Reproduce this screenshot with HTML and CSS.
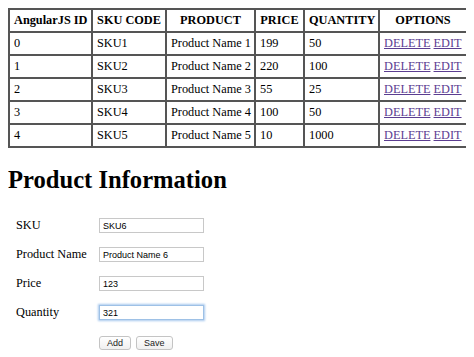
FILE: index.html
```html
<!DOCTYPE html>
<html lang="en">
<head>
  <meta charset="UTF-8">
  <title>Products</title>
  <link rel="stylesheet" href="styles.css">
</head>
<body>

<table class="products">
  <tr>
    <th class="c-id">AngularJS ID</th>
    <th class="c-sku">SKU CODE</th>
    <th class="c-name">PRODUCT</th>
    <th class="c-price">PRICE</th>
    <th class="c-qty">QUANTITY</th>
    <th class="c-opt">OPTIONS</th>
  </tr>
  <tr>
    <td>0</td><td>SKU1</td><td>Product Name 1</td><td>199</td><td>50</td>
    <td><a href="#">DELETE</a> <a href="#">EDIT</a></td>
  </tr>
  <tr>
    <td>1</td><td>SKU2</td><td>Product Name 2</td><td>220</td><td>100</td>
    <td><a href="#">DELETE</a> <a href="#">EDIT</a></td>
  </tr>
  <tr>
    <td>2</td><td>SKU3</td><td>Product Name 3</td><td>55</td><td>25</td>
    <td><a href="#">DELETE</a> <a href="#">EDIT</a></td>
  </tr>
  <tr>
    <td>3</td><td>SKU4</td><td>Product Name 4</td><td>100</td><td>50</td>
    <td><a href="#">DELETE</a> <a href="#">EDIT</a></td>
  </tr>
  <tr>
    <td>4</td><td>SKU5</td><td>Product Name 5</td><td>10</td><td>1000</td>
    <td><a href="#">DELETE</a> <a href="#">EDIT</a></td>
  </tr>
</table>

<h1>Product Information</h1>

<form class="product-form">
  <label for="sku">SKU</label>
  <input type="text" id="sku" value="SKU6">

  <label for="name">Product Name</label>
  <input type="text" id="name" value="Product Name 6">

  <label for="price">Price</label>
  <input type="text" id="price" value="123">

  <label for="qty">Quantity</label>
  <input type="text" id="qty" class="focused" value="321">

  <div class="buttons">
    <button type="button">Add</button>
    <button type="button">Save</button>
  </div>
</form>

</body>
</html>
```

FILE: styles.css
```css
body {
  margin: 8px;
  font-family: 'Liberation Serif', 'Times New Roman', serif;
  font-size: 12.3px;
  color: #000;
  background: #fff;
}

.products {
  border-collapse: collapse;
  border: 2px solid #555;
  table-layout: fixed;
  width: 458px;
}

.products th,
.products td {
  border: 2px solid #555;
  height: 21px;
  padding: 0 4px;
  white-space: nowrap;
}

.products th {
  font-weight: bold;
  text-align: center;
}

.products td {
  text-align: left;
}

.c-id { width: 73px; }
.c-sku { width: 64px; }
.c-name { width: 79px; }
.c-price { width: 39px; }
.c-qty { width: 65px; }
.c-opt { width: 78px; }

.products a {
  color: #5b3d91;
}

h1 {
  font-size: 24.6px;
  margin: 18px 0 24px;
}

.product-form {
  display: grid;
  grid-template-columns: 83px 105px;
  row-gap: 14px;
  align-items: center;
  padding-left: 8px;
}

.product-form label {
  font-size: 12.3px;
}

.product-form input {
  box-sizing: border-box;
  width: 105px;
  height: 15px;
  margin: 0;
  padding: 0 3px;
  border: 1px solid #c8c8c8;
  font-family: 'Liberation Sans', Arial, sans-serif;
  font-size: 9px;
  color: #000;
}

.product-form input.focused {
  outline: none;
  border-color: #9ec1e6;
  box-shadow: 0 0 2px 1px #a9c9ee;
}

.buttons {
  grid-column: 2;
  display: flex;
  gap: 5px;
  margin-top: 2px;
}

.buttons button {
  height: 14px;
  padding: 0 7px;
  border: 1px solid #c4c4c4;
  border-radius: 3px;
  background: linear-gradient(#fff, #f0f0f0);
  font-family: 'Liberation Sans', Arial, sans-serif;
  font-size: 9px;
  color: #222;
}
```
